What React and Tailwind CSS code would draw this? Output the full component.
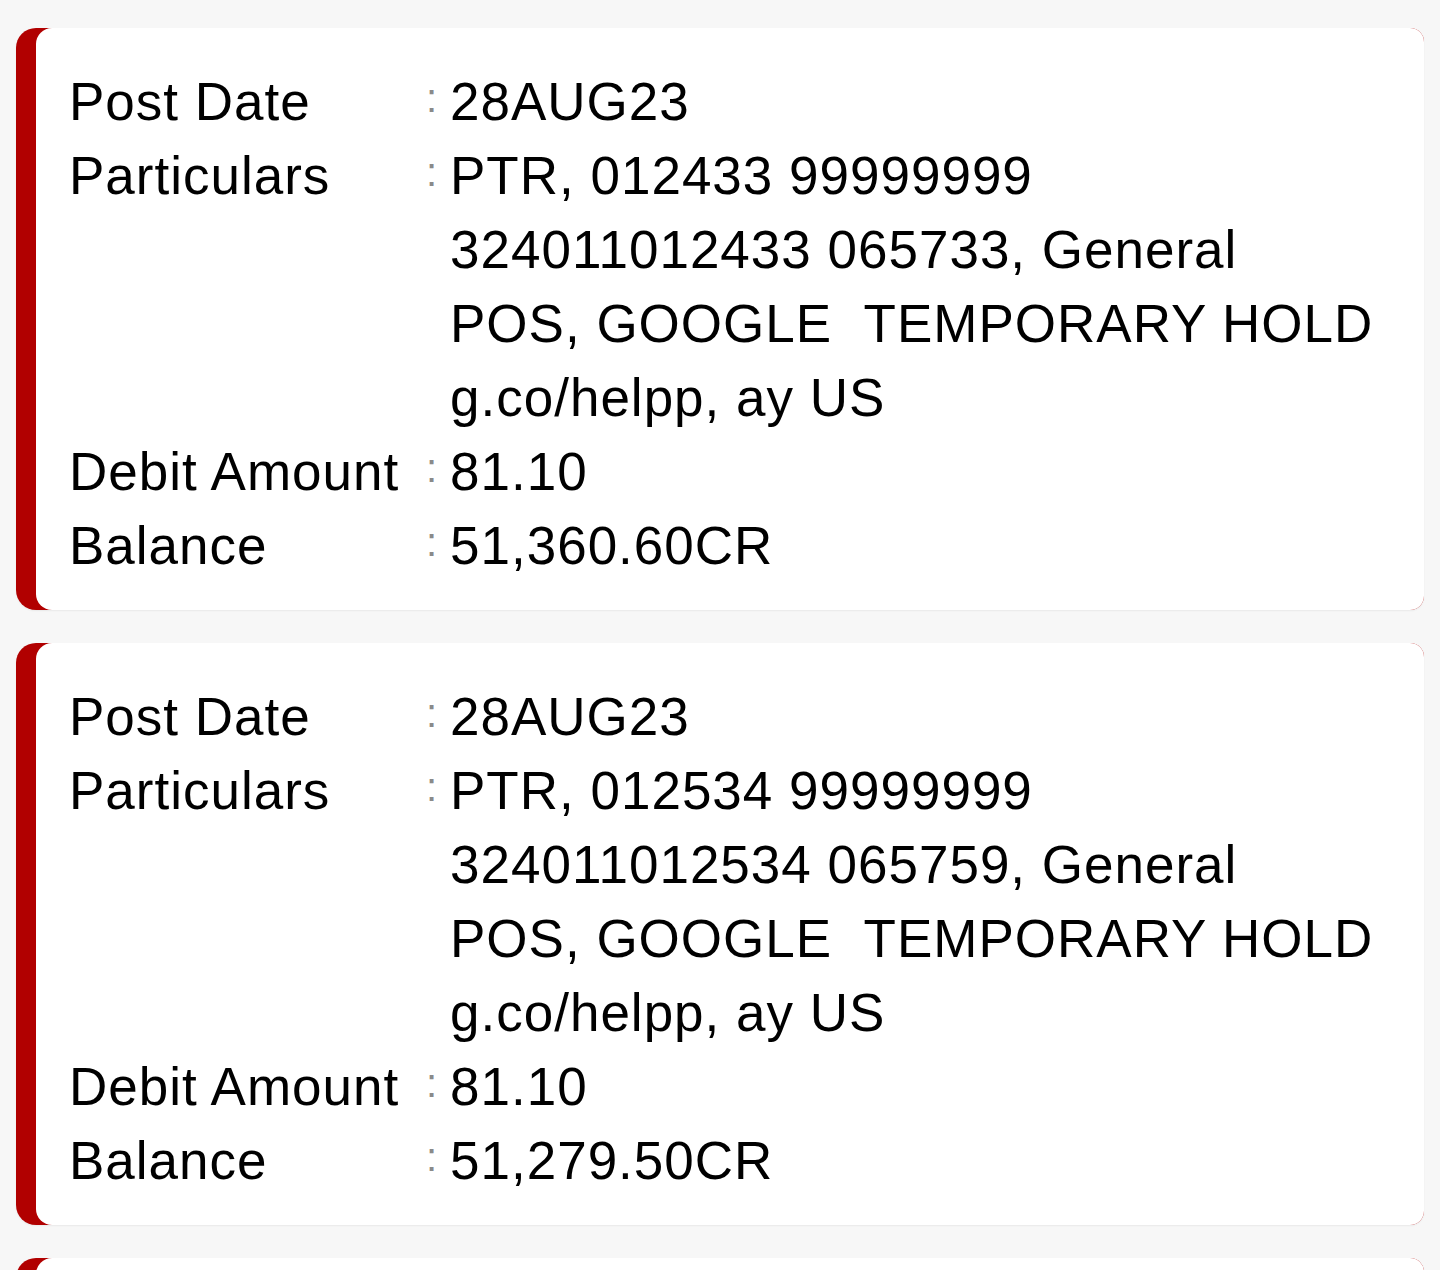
import React from "react";

const txns = [
  {
    date: "28AUG23",
    particulars: [
      "PTR, 012433 99999999",
      "324011012433 065733, General",
      "POS, GOOGLE\u00a0\u00a0TEMPORARY HOLD",
      "g.co/helpp, ay US",
    ],
    debit: "81.10",
    balance: "51,360.60CR",
  },
  {
    date: "28AUG23",
    particulars: [
      "PTR, 012534 99999999",
      "324011012534 065759, General",
      "POS, GOOGLE\u00a0\u00a0TEMPORARY HOLD",
      "g.co/helpp, ay US",
    ],
    debit: "81.10",
    balance: "51,279.50CR",
  },
  {
    date: "28AUG23",
    particulars: ["PTR, 012600 99999999"],
    debit: "81.10",
    balance: "51,198.40CR",
  },
];

const Row = ({ label, children }) => (
  <div className="flex">
    <div className="w-[357px] shrink-0">{label}</div>
    <div className="w-[24px] shrink-0 text-[40px] leading-[74px] tracking-normal text-[#8a8a8a] relative top-[-4px]">
      :
    </div>
    <div className="flex-1">{children}</div>
  </div>
);

const TxnCard = ({ t }) => (
  <div className="shrink-0 rounded-l-[20px] rounded-r-[14px] bg-[#b10000] pl-[20px] overflow-hidden shadow-[0_1px_2px_rgba(0,0,0,0.06)]">
    <div className="bg-white rounded-l-[16px] pl-[33px] pr-6 pt-[37px] pb-[27px] text-[53px] leading-[74px] tracking-[1px] text-black">
      <Row label="Post Date">{t.date}</Row>
      <Row label="Particulars">
        {t.particulars.map((l, i) => (
          <div key={i} className="whitespace-pre">{l}</div>
        ))}
      </Row>
      <Row label="Debit Amount">{t.debit}</Row>
      <Row label="Balance">{t.balance}</Row>
    </div>
  </div>
);

export default function App() {
  return (
    <div
      className="h-[1270px] bg-[#f7f7f7] px-4 pt-[28px] flex flex-col gap-[33px] overflow-hidden"
      style={{ fontFamily: "'Liberation Sans', Arial, sans-serif" }}
    >
      {txns.map((t, i) => (
        <TxnCard key={i} t={t} />
      ))}
    </div>
  );
}
